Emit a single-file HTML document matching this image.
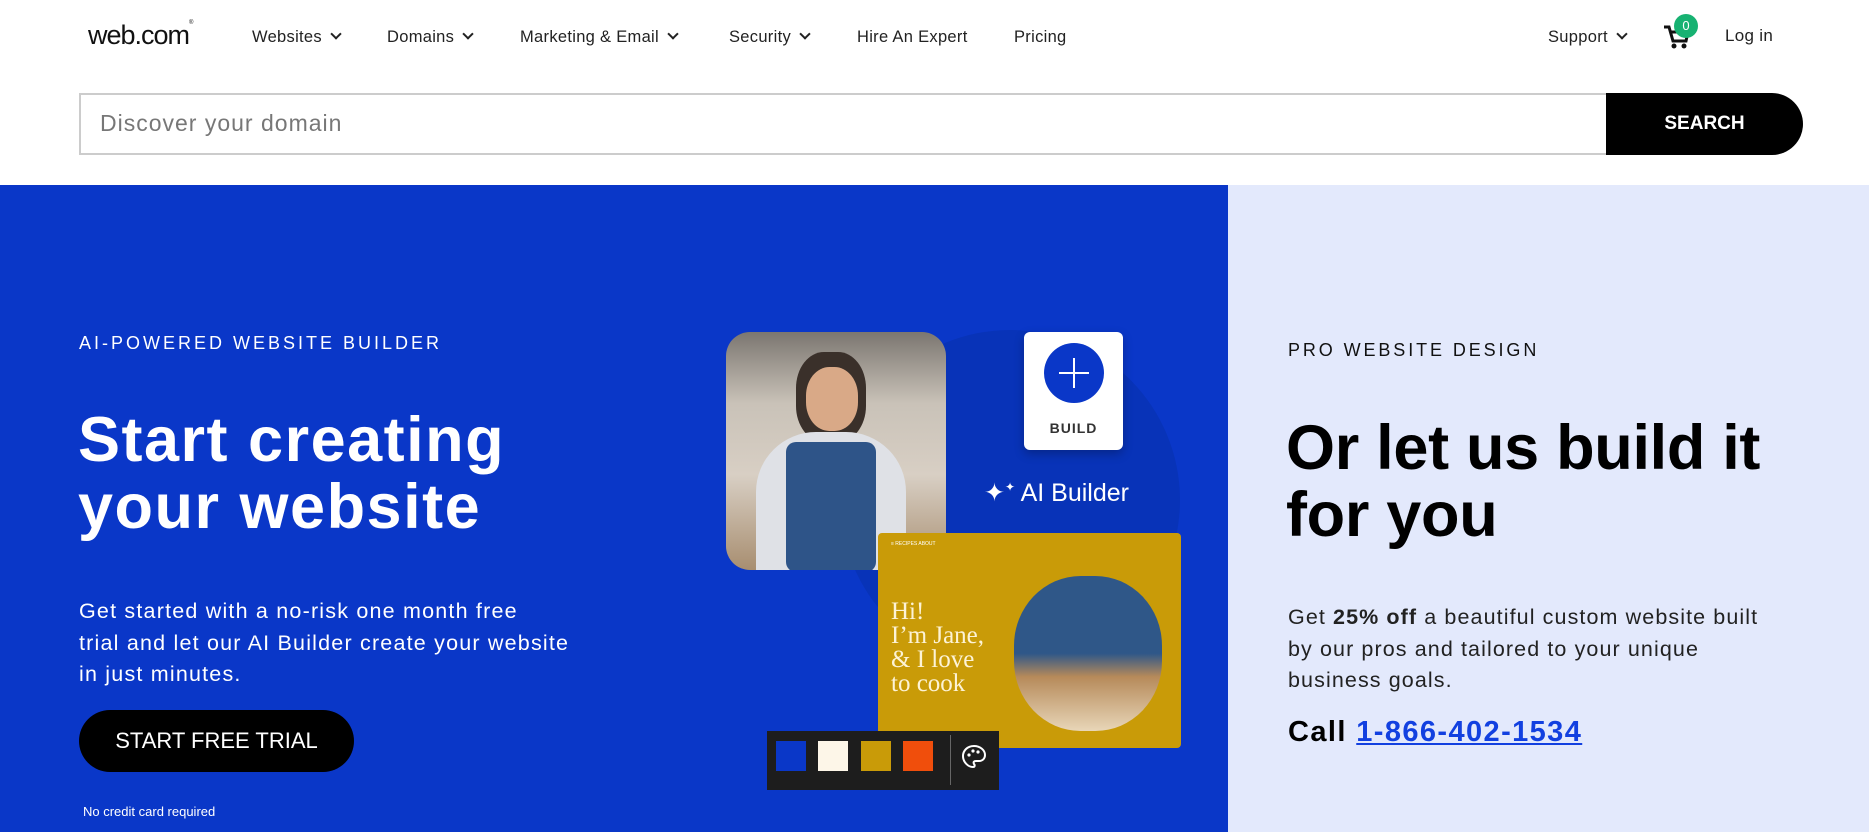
<!DOCTYPE html>
<html><head><meta charset="utf-8"><style>
*{margin:0;padding:0;box-sizing:border-box}
body{width:1869px;height:832px;overflow:hidden;font-family:"Liberation Sans",sans-serif;background:#fff;position:relative;color:#1a1a1a}
.a{position:absolute;white-space:nowrap}
.nav{font-size:16.5px;color:#222;top:28px;letter-spacing:0.3px}
.chev{display:inline-block;width:8px;height:8px;border-right:2px solid #222;border-bottom:2px solid #222;transform:rotate(45deg);margin-left:10px;position:relative;top:-4px}
</style></head><body>
<div class="a" style="left:88px;top:20px;font-size:27px;letter-spacing:-1px;color:#111">web.com<span style="font-size:6px;vertical-align:top">®</span></div>
<div class="a nav" style="left:252px">Websites<span class="chev"></span></div>
<div class="a nav" style="left:387px">Domains<span class="chev"></span></div>
<div class="a nav" style="left:520px">Marketing &amp; Email<span class="chev"></span></div>
<div class="a nav" style="left:729px">Security<span class="chev"></span></div>
<div class="a nav" style="left:857px">Hire An Expert</div>
<div class="a nav" style="left:1014px">Pricing</div>
<div class="a nav" style="left:1548px">Support<span class="chev"></span></div>
<svg class="a" style="left:1662px;top:24px" width="28" height="26" viewBox="0 0 28 26"><path d="M2 3h5l4 14h13l2-9H9" fill="none" stroke="#111" stroke-width="3"/><circle cx="12" cy="22" r="2.5" fill="#111"/><circle cx="22" cy="22" r="2.5" fill="#111"/></svg>
<div class="a" style="left:1674px;top:14px;width:24px;height:24px;border-radius:50%;background:#17b272;color:#fff;font-size:13px;text-align:center;line-height:24px">0</div>
<div class="a nav" style="left:1725px;top:26px;font-size:17px">Log in</div>
<div class="a" style="left:79px;top:93px;width:1529px;height:62px;border:2px solid #ccc;border-right:none"></div>
<div class="a" style="left:100px;top:110px;font-size:23px;color:#777;letter-spacing:1px">Discover your domain</div>
<div class="a" style="left:1606px;top:93px;width:197px;height:62px;background:#000;border-radius:0 31px 31px 0;color:#fff;font-weight:bold;font-size:19px;text-align:center;line-height:62px">SEARCH</div>

<div class="a" style="left:0;top:185px;width:1228px;height:647px;background:#0a37c8"></div>
<div class="a" style="left:1228px;top:185px;width:641px;height:647px;background:#e3e9fc"></div>

<div class="a" style="left:79px;top:333px;color:#fff;font-size:18px;letter-spacing:3px">AI-POWERED WEBSITE BUILDER</div>
<div class="a" style="left:78px;top:407px;color:#fff;font-size:63px;font-weight:bold;line-height:67px;letter-spacing:1.5px">Start creating<br>your website</div>
<div class="a" style="left:79px;top:596px;color:#fff;font-size:21.5px;line-height:31.5px;letter-spacing:1.2px">Get started with a no-risk one month free<br>trial and let our AI Builder create your website<br>in just minutes.</div>
<div class="a" style="left:79px;top:710px;width:275px;height:62px;border-radius:31px;background:#000;color:#fff;font-size:22px;text-align:center;line-height:62px">START FREE TRIAL</div>
<div class="a" style="left:83px;top:804px;color:#fff;font-size:13px">No credit card required</div>

<div class="a" style="left:840px;top:330px;width:340px;height:340px;border-radius:50%;background:#0833b8"></div>
<div class="a" style="left:726px;top:332px;width:220px;height:238px;border-radius:24px;overflow:hidden;background:linear-gradient(180deg,#7b7670 0%,#c9c2b8 30%,#d8cfc4 60%,#a88e70 100%)">
<div style="position:absolute;left:70px;top:20px;width:70px;height:90px;border-radius:40%;background:#3a302a"></div>
<div style="position:absolute;left:80px;top:35px;width:52px;height:64px;border-radius:45%;background:#d9a987"></div>
<div style="position:absolute;left:30px;top:100px;width:150px;height:150px;border-radius:40% 40% 0 0;background:#dfe1e6"></div>
<div style="position:absolute;left:60px;top:110px;width:90px;height:130px;border-radius:10px;background:#2e5488"></div>
</div>
<div class="a" style="left:1024px;top:332px;width:99px;height:118px;background:#fff;border-radius:6px;box-shadow:0 4px 10px rgba(0,0,0,.25)"></div>
<div class="a" style="left:1044px;top:343px;width:60px;height:60px;border-radius:50%;background:#0a37c8"></div>
<div class="a" style="left:1059px;top:372px;width:30px;height:2px;background:#fff"></div>
<div class="a" style="left:1073px;top:358px;width:2px;height:30px;background:#fff"></div>
<div class="a" style="left:1024px;top:420px;width:99px;text-align:center;font-size:14px;font-weight:bold;color:#333;letter-spacing:1px">BUILD</div>
<div class="a" style="left:984px;top:478px;color:#fff;font-size:25px">✦<span style="font-size:12px;position:relative;top:-10px">✦</span> AI Builder</div>
<div class="a" style="left:878px;top:533px;width:303px;height:215px;background:#c99b08;border-radius:4px"></div>
<div class="a" style="left:891px;top:533px;color:#fff;font-size:5px;line-height:22px">≡ RECIPES ABOUT</div>
<div class="a" style="left:891px;top:600px;color:#fdf3d6;font-family:'Liberation Serif',serif;font-size:25px;line-height:24px">Hi!<br>I’m Jane,<br>&amp; I love<br>to cook</div>
<div class="a" style="left:1014px;top:576px;width:148px;height:155px;border-radius:45%;background:linear-gradient(180deg,#2f5788 0%,#2f5788 50%,#b68a5a 65%,#e8d6b8 100%)"></div>
<div class="a" style="left:767px;top:731px;width:232px;height:59px;background:#1d1d1d"></div>
<div class="a" style="left:776px;top:741px;width:30px;height:30px;background:#0a37c8"></div>
<div class="a" style="left:818px;top:741px;width:30px;height:30px;background:#fdf6e8"></div>
<div class="a" style="left:861px;top:741px;width:30px;height:30px;background:#c99b08"></div>
<div class="a" style="left:903px;top:741px;width:30px;height:30px;background:#f04e0c"></div>
<div class="a" style="left:950px;top:735px;width:1px;height:50px;background:#666"></div>
<svg class="a" style="left:960px;top:743px" width="28" height="28" viewBox="0 0 28 28"><path d="M14 3C7 3 3 8 3 13c0 6 5 11 10 11 2 0 2-2 1-3-1-2 0-3 2-3h3c4 0 6-3 6-6C25 7 20 3 14 3z" fill="none" stroke="#fff" stroke-width="2"/><circle cx="9" cy="12" r="1.6" fill="#fff"/><circle cx="13" cy="8" r="1.6" fill="#fff"/><circle cx="18" cy="9" r="1.6" fill="#fff"/></svg>

<div class="a" style="left:1288px;top:340px;font-size:18px;letter-spacing:2.9px;color:#111">PRO WEBSITE DESIGN</div>
<div class="a" style="left:1286px;top:415px;font-size:63px;font-weight:bold;line-height:67px;color:#000;letter-spacing:-0.3px">Or let us build it<br>for you</div>
<div class="a" style="left:1288px;top:602px;font-size:21.5px;line-height:31.5px;color:#222;letter-spacing:1.1px">Get <b>25% off</b> a beautiful custom website built<br>by our pros and tailored to your unique<br>business goals.</div>
<div class="a" style="left:1288px;top:716px;font-size:29px;font-weight:bold;color:#000;letter-spacing:1.4px">Call <span style="color:#1240e0;text-decoration:underline">1-866-402-1534</span></div>
</body></html>
